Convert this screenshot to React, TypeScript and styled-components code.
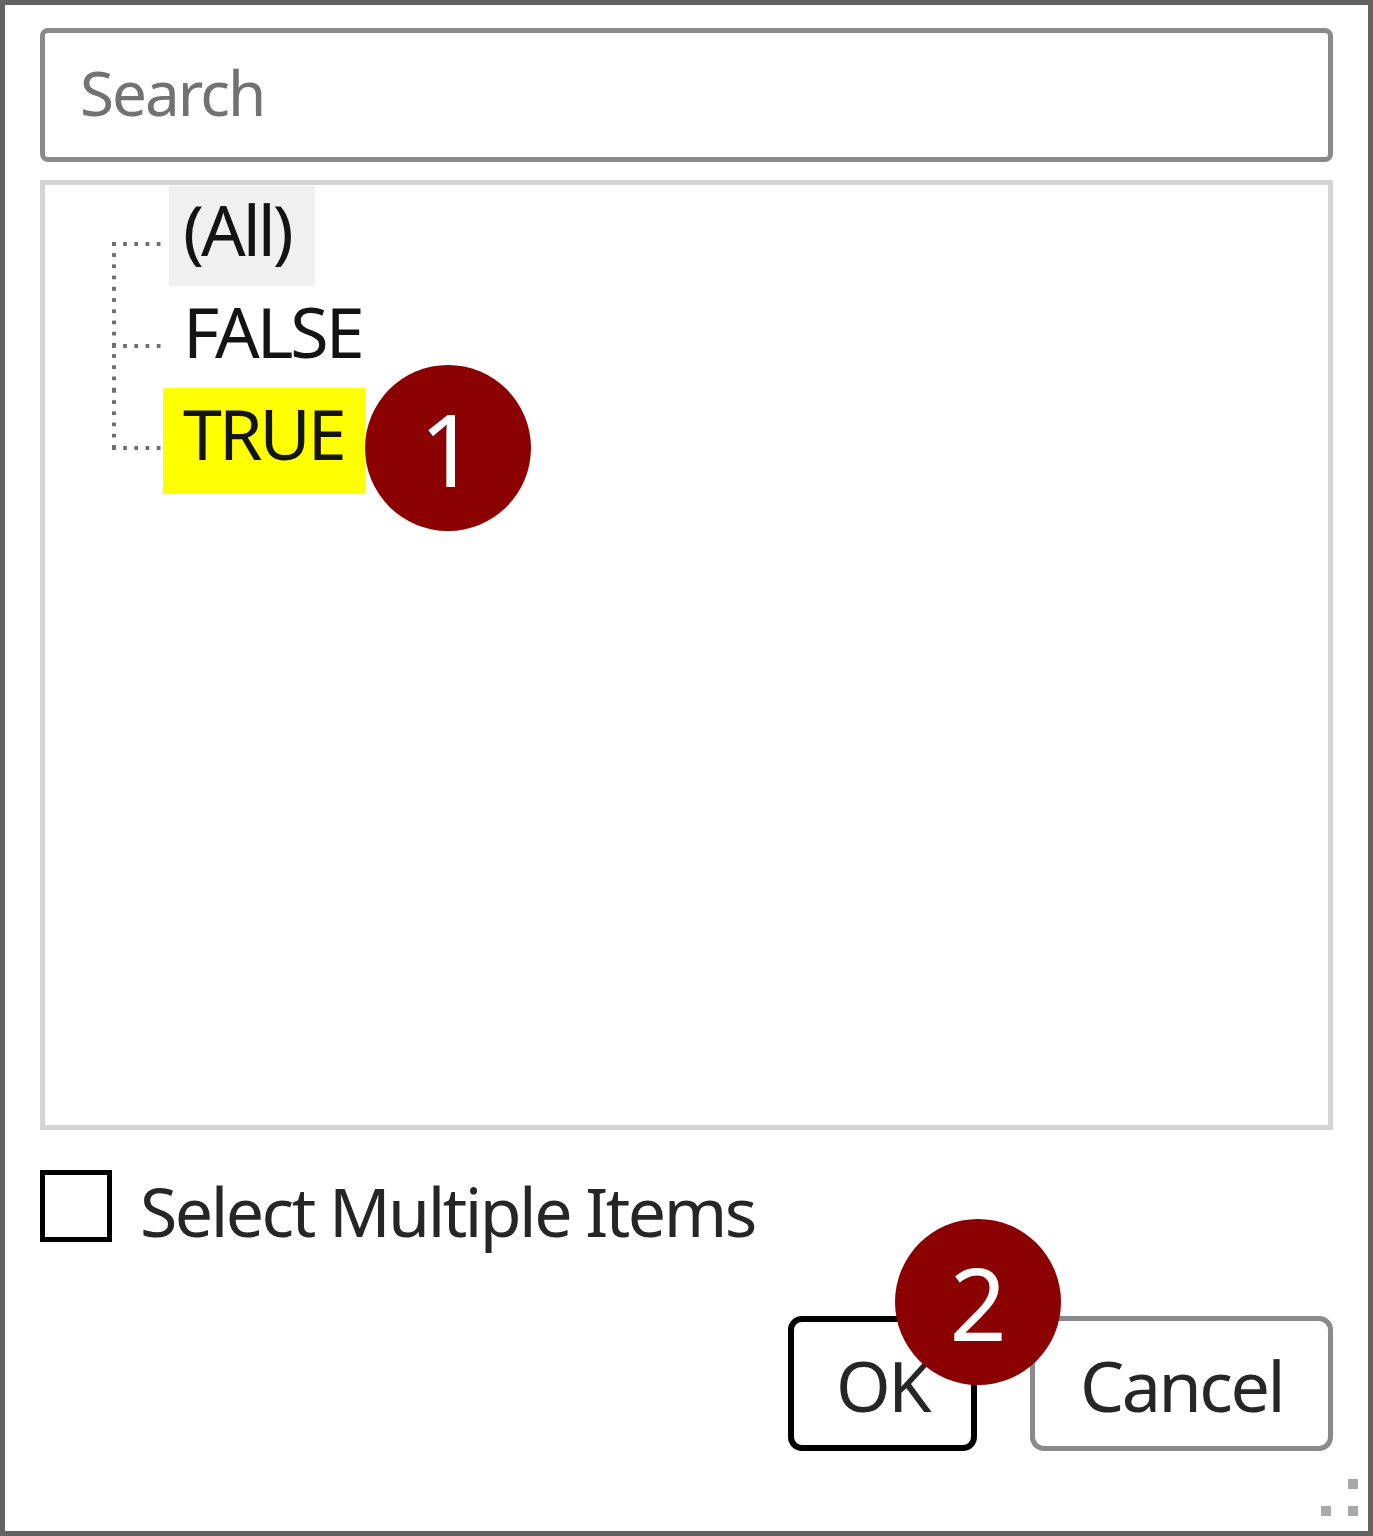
import styled, { createGlobalStyle } from 'styled-components';

const GlobalStyle = createGlobalStyle`
  html, body {
    margin: 0;
    padding: 0;
    background: #ffffff;
  }

  * {
    box-sizing: border-box;
  }
`;

type BranchPos = 'first' | 'middle' | 'last';
type Tone = 'hover' | 'plain' | 'mark';

const items: { label: string; branch: BranchPos; tone: Tone; width?: number }[] = [
  { label: '(All)', branch: 'first', tone: 'hover', width: 146 },
  { label: 'FALSE', branch: 'middle', tone: 'plain' },
  { label: 'TRUE', branch: 'last', tone: 'mark', width: 202 },
];

const App = () => {
  return (
    <>
      <GlobalStyle />
      <Window>
        <SearchBox>
          <SearchHint>Search</SearchHint>
        </SearchBox>
        <ListBox>
          {items.map((item) => (
            <Row key={item.label}>
              <Branch $pos={item.branch} />
              <Label $tone={item.tone} $width={item.width}>
                {item.label}
                {item.tone === 'mark' && <Badge $left="100%" $top="-23px">1</Badge>}
              </Label>
            </Row>
          ))}
        </ListBox>
        <CheckRow>
          <CheckBox />
          <CheckText>Select Multiple Items</CheckText>
        </CheckRow>
        <ButtonRow>
          <Button $primary>OK</Button>
          <Button>Cancel</Button>
          <Badge $left="855px" $top="-97px">2</Badge>
        </ButtonRow>
        <Footer>
          <svg width="40" height="40" viewBox="0 0 40 40">
            <rect x="29" y="2" width="10" height="10" fill="#a9a9a9" />
            <rect x="2" y="29" width="10" height="10" fill="#a9a9a9" />
            <rect x="29" y="29" width="10" height="10" fill="#a9a9a9" />
          </svg>
        </Footer>
      </Window>
    </>
  );
};

export default App;

const Window = styled.div`
  position: relative;
  width: 1373px;
  height: 1536px;
  border: 5px solid #636363;
  padding: 23px 35px 0 35px;
  display: flex;
  flex-direction: column;
  font-family: 'Noto Sans', 'Open Sans', sans-serif;
  background: #ffffff;
`;

const SearchBox = styled.div`
  height: 134px;
  border: 5px solid #8a8a8a;
  border-radius: 8px;
  padding-left: 35px;
  display: flex;
  align-items: center;
`;

const SearchHint = styled.span`
  font-size: 62px;
  letter-spacing: -2px;
  color: #727272;
  margin-top: -6px;
`;

const ListBox = styled.div`
  margin-top: 18px;
  height: 950px;
  border: 5px solid #d4d4d4;
  padding-top: 1px;
  display: flex;
  flex-direction: column;
`;

const Row = styled.div`
  height: 102px;
  display: flex;
  align-items: flex-start;
`;

const Branch = styled.div<{ $pos: BranchPos }>`
  position: relative;
  margin-left: 67px;
  width: 51px;
  height: 102px;
  flex-shrink: 0;

  &::before {
    content: '';
    position: absolute;
    left: 0;
    width: 4px;
    top: ${(p) => (p.$pos === 'first' ? '56px' : '0')};
    height: ${(p) => (p.$pos === 'middle' ? '102px' : p.$pos === 'first' ? '46px' : '60px')};
    background-image: linear-gradient(to bottom, #6e6e6e 4px, transparent 4px);
    background-size: 4px 11.2px;
    background-position: 0 ${(p) => (p.$pos === 'first' ? '0' : '-1px')};
  }

  &::after {
    content: '';
    position: absolute;
    left: 0;
    top: 56px;
    width: 50px;
    height: 4px;
    background-image: linear-gradient(to right, #6e6e6e 4px, transparent 4px);
    background-size: 11.2px 4px;
  }
`;

const Label = styled.div<{ $tone: Tone; $width?: number }>`
  position: relative;
  flex-shrink: 0;
  width: ${(p) => (p.$width ? `${p.$width}px` : 'auto')};
  height: ${(p) => (p.$tone === 'mark' ? '106px' : '100px')};
  margin-top: ${(p) => (p.$tone === 'mark' ? '-2px' : '0')};
  margin-left: ${(p) => (p.$tone === 'mark' ? '0' : '6px')};
  padding-left: ${(p) => (p.$tone === 'mark' ? '20px' : '14px')};
  line-height: ${(p) => (p.$tone === 'mark' ? '90px' : '86px')};
  font-size: 70px;
  letter-spacing: -3px;
  color: #141414;
  white-space: nowrap;
  background: ${(p) => (p.$tone === 'hover' ? '#f0f0f0' : p.$tone === 'mark' ? '#ffff00' : 'transparent')};
`;

const Badge = styled.div<{ $left: string; $top: string }>`
  position: absolute;
  left: ${(p) => p.$left};
  top: ${(p) => p.$top};
  width: 166px;
  height: 166px;
  border-radius: 50%;
  background: #8b0000;
  color: #ffffff;
  font-family: 'Noto Sans', sans-serif;
  font-size: 100px;
  line-height: 166px;
  text-align: center;
  letter-spacing: 0;
  z-index: 2;
`;

const CheckRow = styled.div`
  margin-top: 40px;
  height: 72px;
  display: flex;
  align-items: center;
  gap: 28px;
`;

const CheckBox = styled.div`
  width: 72px;
  height: 72px;
  border: 5px solid #000000;
  flex-shrink: 0;
`;

const CheckText = styled.span`
  font-size: 68px;
  letter-spacing: -2.5px;
  color: #262626;
  margin-top: 8px;
`;

const ButtonRow = styled.div`
  position: relative;
  margin-top: 74px;
  display: flex;
  justify-content: flex-end;
  gap: 53px;
`;

const Button = styled.div<{ $primary?: boolean }>`
  width: ${(p) => (p.$primary ? '189px' : '303px')};
  height: 135px;
  border: ${(p) => (p.$primary ? '6px solid #000000' : '5px solid #8a8a8a')};
  border-radius: 14px;
  display: flex;
  align-items: center;
  justify-content: center;
  font-size: 70px;
  letter-spacing: -2.5px;
  color: #262626;
  padding-top: 2px;
`;

const Footer = styled.div`
  margin-top: 26px;
  margin-right: -26px;
  display: flex;
  justify-content: flex-end;
`;
